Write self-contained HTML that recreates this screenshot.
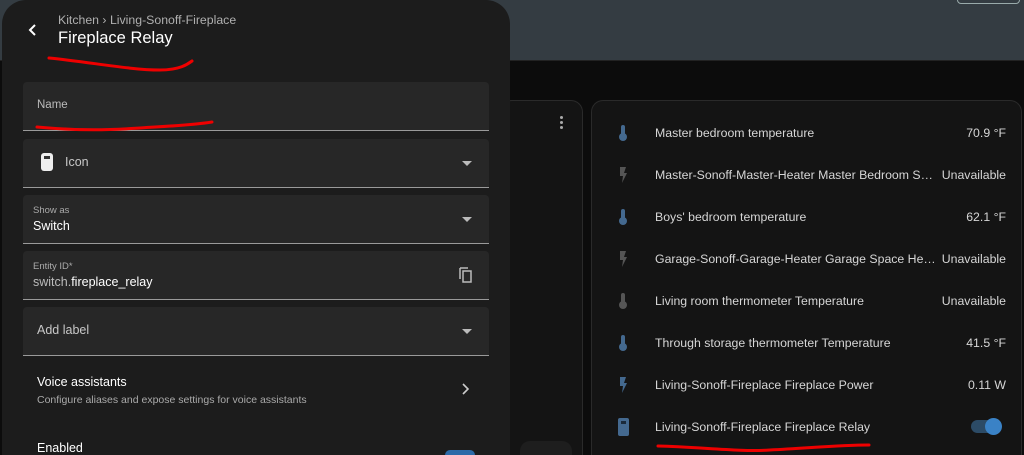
<!DOCTYPE html>
<html style="width:1024px;height:455px;overflow:hidden"><head><meta charset="utf-8"><style>
*{box-sizing:border-box;margin:0;padding:0}
body{width:1024px;height:455px;overflow:hidden;background:#0c0c0c;font-family:"Liberation Sans",sans-serif;position:relative}
.hdr{position:absolute;left:0;top:0;width:1024px;height:61px;background:#343c42;border-bottom:1px solid #222}
.obtn{position:absolute;left:957px;top:-10px;width:63px;height:14px;border:1px solid #9aa;border-radius:4px}
.card{position:absolute;top:100px;height:355px;background:#141414;border:1px solid #2a2a2a;border-bottom:none;border-radius:12px 12px 0 0}
.dlg{position:absolute;left:2px;top:0;width:508px;height:455px;background:#1c1c1c;border-radius:24px 24px 0 0}
.f{position:absolute;left:23px;width:466px;height:49px;background:#272727;border-radius:4px 4px 0 0;border-bottom:1px solid #9a9a9a}
.lbl{position:absolute;color:#c8c8c8;font-size:12.5px}
.arrow{position:absolute;right:17px;top:22px;width:0;height:0;border-left:5px solid transparent;border-right:5px solid transparent;border-top:5px solid #bbb}
.row{position:absolute;left:655px;max-width:282px;font-size:12.3px;color:#d6d6d6;white-space:nowrap;overflow:hidden;text-overflow:ellipsis}
.val{position:absolute;right:18px;font-size:12.3px;color:#d6d6d6;text-align:right}
.ic{position:absolute;left:617px}
</style></head><body>
<div class="hdr"><div class="obtn"></div></div>
<div class="card" style="left:500px;width:83px"><div style="position:absolute;left:59px;top:15px;width:3px">
<div style="width:3px;height:3px;border-radius:50%;background:#aaa;margin-bottom:2px"></div><div style="width:3px;height:3px;border-radius:50%;background:#aaa;margin-bottom:2px"></div><div style="width:3px;height:3px;border-radius:50%;background:#aaa"></div></div></div>
<div style="position:absolute;left:520px;top:441px;width:52px;height:14px;background:#1e1e1e;border-radius:10px 10px 0 0"></div>
<div class="card" style="left:591px;width:431px"></div>

<div class="dlg"></div>
<svg style="position:absolute;left:27px;top:23px" width="12" height="14"><path d="M8 2 L3 7 L8 12" stroke="#fff" stroke-width="2" fill="none"/></svg>
<div style="position:absolute;left:58px;top:13px;color:#b0b0b0;font-size:12.3px">Kitchen › Living-Sonoff-Fireplace</div>
<div style="position:absolute;left:58px;top:29px;color:#fff;font-size:16.5px">Fireplace Relay</div>

<div class="f" style="top:82px"><div class="lbl" style="left:14px;top:17px;font-size:11.5px;color:#bbb">Name</div></div>
<div class="f" style="top:139px"><div style="position:absolute;left:18px;top:14px;width:12px;height:18px;background:#eee;border-radius:3px"><div style="margin:3px auto;width:6px;height:3px;background:#333"></div></div><div class="lbl" style="left:42px;top:16px">Icon</div><div class="arrow"></div></div>
<div class="f" style="top:195px"><div class="lbl" style="left:10px;top:10px;font-size:9.5px;color:#aaa">Show as</div><div class="lbl" style="left:10px;top:24px;color:#fff">Switch</div><div class="arrow"></div></div>
<div class="f" style="top:251px"><div class="lbl" style="left:10px;top:10px;font-size:9.5px;color:#aaa">Entity ID*</div><div class="lbl" style="left:10px;top:24px;color:#bbb">switch.<span style="color:#fff">fireplace_relay</span></div>
<svg style="position:absolute;left:435px;top:16px" width="16" height="16"><path d="M2 1h8M2 1v11" stroke="#bbb" stroke-width="1.5" fill="none"/><rect x="5" y="4" width="8" height="11" stroke="#bbb" stroke-width="1.5" fill="none"/></svg></div>
<div class="f" style="top:307px"><div class="lbl" style="left:14px;top:16px">Add label</div><div class="arrow"></div></div>
<div style="position:absolute;left:37px;top:375px;color:#fff;font-size:12.5px">Voice assistants</div>
<div style="position:absolute;left:37px;top:394px;color:#aaa;font-size:10.5px">Configure aliases and expose settings for voice assistants</div>
<svg style="position:absolute;left:461px;top:382px" width="10" height="14"><path d="M2 2 L7 7 L2 12" stroke="#ccc" stroke-width="1.6" fill="none"/></svg>
<div style="position:absolute;left:37px;top:442px;color:#fff;font-size:12.5px;line-height:13px;height:13px;overflow:hidden">Enabled</div>
<div style="position:absolute;left:445px;top:450px;width:30px;height:5px;background:#2c6aa8;border-radius:6px 6px 0 0"></div>

<div class="row" style="top:126px">Master bedroom temperature</div><div class="val" style="top:126px">70.9 °F</div>
<div class="row" style="top:168px">Master-Sonoff-Master-Heater Master Bedroom Space Heater</div><div class="val" style="top:168px">Unavailable</div>
<div class="row" style="top:210px">Boys' bedroom temperature</div><div class="val" style="top:210px">62.1 °F</div>
<div class="row" style="top:252px">Garage-Sonoff-Garage-Heater Garage Space Heater</div><div class="val" style="top:252px">Unavailable</div>
<div class="row" style="top:294px">Living room thermometer Temperature</div><div class="val" style="top:294px">Unavailable</div>
<div class="row" style="top:336px">Through storage thermometer Temperature</div><div class="val" style="top:336px">41.5 °F</div>
<div class="row" style="top:378px">Living-Sonoff-Fireplace Fireplace Power</div><div class="val" style="top:378px">0.11 W</div>
<div class="row" style="top:420px">Living-Sonoff-Fireplace Fireplace Relay</div>
<div style="position:absolute;left:971px;top:420px;width:30px;height:13px;background:#2c4b66;border-radius:7px"></div>
<div style="position:absolute;left:985px;top:418px;width:17px;height:17px;background:#3a82c6;border-radius:50%"></div>

<svg class="ic" style="top:124px" width="12" height="18"><rect x="4" y="1" width="4" height="12" rx="2" fill="#44698f"/><circle cx="6" cy="13" r="4" fill="#44698f"/></svg>
<svg class="ic" style="top:166px" width="12" height="18"><path d="M3 1h6l-2 6h3l-5 10 1-7H3z" fill="#555"/></svg>
<svg class="ic" style="top:208px" width="12" height="18"><rect x="4" y="1" width="4" height="12" rx="2" fill="#44698f"/><circle cx="6" cy="13" r="4" fill="#44698f"/></svg>
<svg class="ic" style="top:250px" width="12" height="18"><path d="M3 1h6l-2 6h3l-5 10 1-7H3z" fill="#555"/></svg>
<svg class="ic" style="top:292px" width="12" height="18"><rect x="4" y="1" width="4" height="12" rx="2" fill="#555"/><circle cx="6" cy="13" r="4" fill="#555"/></svg>
<svg class="ic" style="top:334px" width="12" height="18"><rect x="4" y="1" width="4" height="12" rx="2" fill="#44698f"/><circle cx="6" cy="13" r="4" fill="#44698f"/></svg>
<svg class="ic" style="top:376px" width="12" height="18"><path d="M3 1h6l-2 6h3l-5 10 1-7H3z" fill="#44698f"/></svg>
<svg class="ic" style="top:418px" width="14" height="20"><rect x="1" y="0" width="11" height="18" rx="2" fill="#44698f"/><rect x="4" y="3" width="5" height="3" fill="#1a2a3a"/></svg>

<svg style="position:absolute;left:0;top:0" width="1024" height="455">
<path d="M49 58 C90 62 130 70 160 70 C180 70 188 64 192 61" stroke="#e00" stroke-width="3" fill="none" stroke-linecap="round"/>
<path d="M37 127 C80 131 110 130 140 128 C170 126 195 125 212 122" stroke="#e00" stroke-width="3" fill="none" stroke-linecap="round"/>
<path d="M658 446 C700 447 740 452 770 450 C810 448 840 445 869 445" stroke="#e00" stroke-width="3" fill="none" stroke-linecap="round"/>
</svg>
</body></html>
